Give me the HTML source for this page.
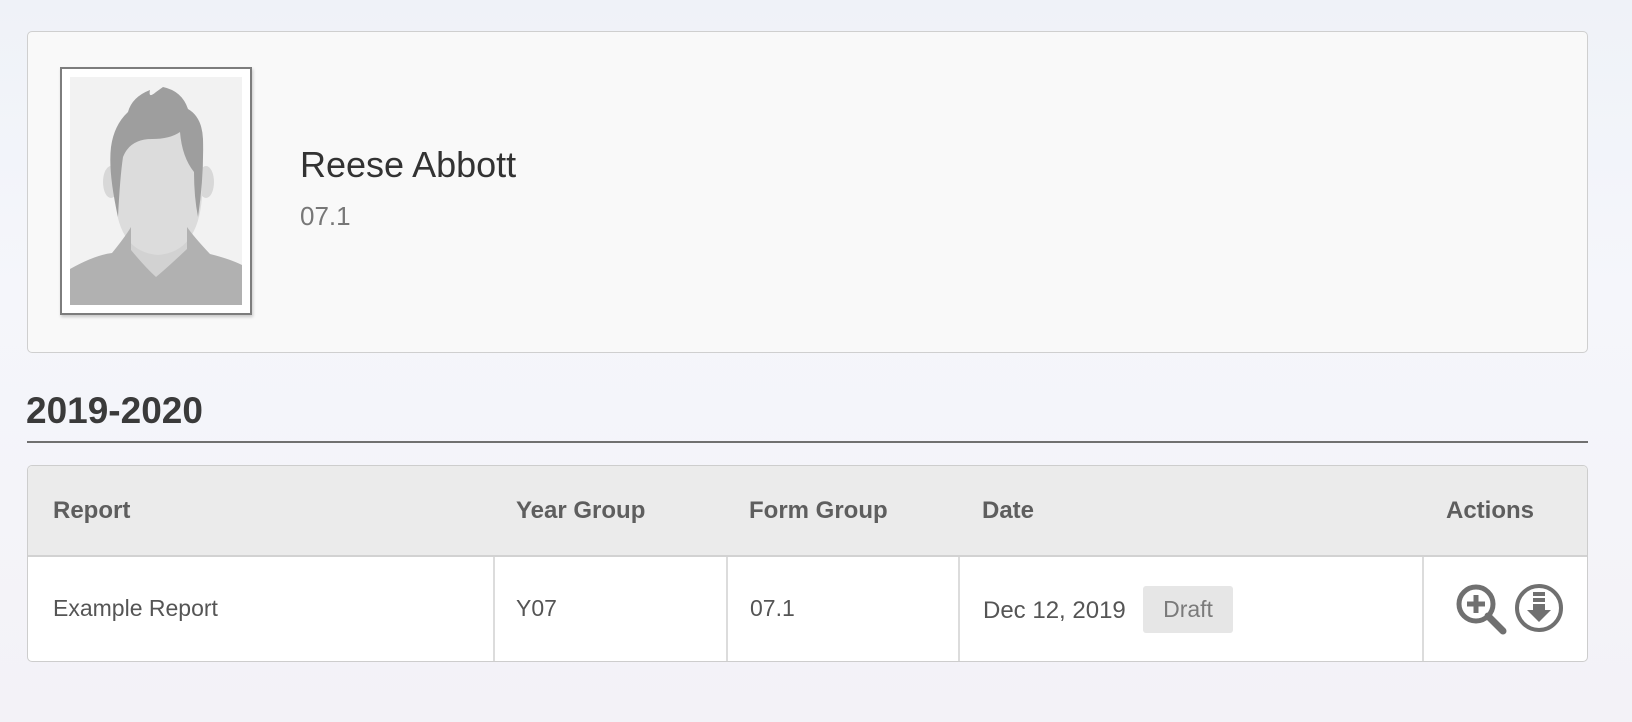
<!DOCTYPE html>
<html><head><style>
*{margin:0;padding:0;box-sizing:border-box}
body{width:1632px;height:722px;overflow:hidden;font-family:"Liberation Sans",sans-serif;background:linear-gradient(180deg,#eff2f8 0%,#f5f6fb 40%,#f3f2f7 100%);position:relative}
.card{position:absolute;left:27px;top:31px;width:1561px;height:322px;background:#f9f9f9;border:1px solid #cfcfcf;border-radius:5px}
.photo{position:absolute;left:60px;top:67px;width:192px;height:248px;background:#fff;border:2px solid #7d7d7d;box-shadow:1px 2px 3px rgba(0,0,0,.2)}
.photo svg{position:absolute;left:8px;top:8px}
.name{position:absolute;left:300px;top:144px;font-size:36px;color:#333}
.form{position:absolute;left:300px;top:201px;font-size:26px;color:#777}
h2{position:absolute;left:26px;top:390px;font-size:37px;font-weight:bold;color:#3a3a3a}
.rule{position:absolute;left:27px;top:441px;width:1561px;height:2px;background:#707070}
.tbl{position:absolute;left:27px;top:465px;width:1561px;height:197px;background:#fff;border:1px solid #cdcdcd;border-radius:5px;overflow:hidden}
.hd{position:absolute;left:0;top:0;width:100%;height:91px;background:#ebebeb;border-bottom:2px solid #d2d2d2}
.th{position:absolute;top:31px;font-size:24px;font-weight:bold;color:#5e5e5e}
.td{position:absolute;top:129px;font-size:23px;color:#555}
.vl{position:absolute;top:91px;bottom:0;width:2px;background:#dcdcdc}
.badge{position:absolute;left:1115px;top:120px;width:90px;height:47px;background:#e6e6e6;border-radius:3px;color:#7a7a7a;font-size:23px;text-align:center;line-height:47px}
</style></head><body>
<div class="card"></div>
<div class="photo"><svg width="172" height="228" viewBox="0 0 172 228">
<rect width="172" height="228" fill="#f2f2f2"/>
<ellipse cx="41" cy="105" rx="8" ry="16" fill="#d8d8d8"/><ellipse cx="136" cy="105" rx="8" ry="16" fill="#d8d8d8"/>
<rect x="61" y="150" width="56" height="50" fill="#d2d2d2"/>
<path d="M45 60 Q45 35 88 35 Q132 35 132 75 L132 120 Q128 175 88 178 Q48 175 45 120 Z" fill="#dcdcdc"/>
<path d="M0 192 Q25 178 42 176 Q55 160 61 150 L61 173 Q75 190 86 200 Q98 190 117 172 L117 150 Q124 160 140 177 Q160 182 172 188 L172 228 L0 228 Z" fill="#b1b1b1"/>
<path d="M48 140 Q38 95 41 70 Q44 48 58 35 Q62 20 80 13 Q78 22 86 15 L93 10 Q112 14 118 32 Q132 40 133 62 Q134 100 128 140 Q124 120 124 95 Q112 80 110 55 Q100 62 82 62 Q60 62 53 80 Q50 100 48 140 Z" fill="#9e9e9e"/>
</svg></div>
<div class="name">Reese Abbott</div>
<div class="form">07.1</div>
<h2>2019-2020</h2>
<div class="rule"></div>
<div class="tbl">
<div class="hd"></div>
<div class="th" style="left:25px">Report</div>
<div class="th" style="left:488px">Year Group</div>
<div class="th" style="left:721px">Form Group</div>
<div class="th" style="left:954px">Date</div>
<div class="th" style="left:1418px">Actions</div>
<div class="vl" style="left:465px"></div>
<div class="vl" style="left:698px"></div>
<div class="vl" style="left:930px"></div>
<div class="vl" style="left:1394px"></div>
<div class="td" style="left:25px">Example Report</div>
<div class="td" style="left:488px">Y07</div>
<div class="td" style="left:722px">07.1</div>
<div class="td" style="left:955px;top:131px;font-size:24px">Dec 12, 2019</div>
<div class="badge">Draft</div>
<svg style="position:absolute;left:1427px;top:117px" width="54" height="52" viewBox="0 0 54 52">
<circle cx="21" cy="21" r="17" fill="none" stroke="#707070" stroke-width="5"/>
<path d="M33 33 L48 48" stroke="#707070" stroke-width="7" stroke-linecap="round"/>
<path d="M21 12 V30 M12 21 H30" stroke="#707070" stroke-width="5"/>
</svg>
<svg style="position:absolute;left:1485px;top:116px" width="52" height="52" viewBox="0 0 52 52">
<circle cx="26" cy="26" r="22" fill="none" stroke="#707070" stroke-width="4"/>
<rect x="20" y="10" width="12" height="4" fill="#707070"/>
<rect x="20" y="16" width="12" height="4" fill="#707070"/>
<path d="M20 22 H32 V28 H38 L26 40 L14 28 H20 Z" fill="#707070"/>
</svg>
</div>
</body></html>
